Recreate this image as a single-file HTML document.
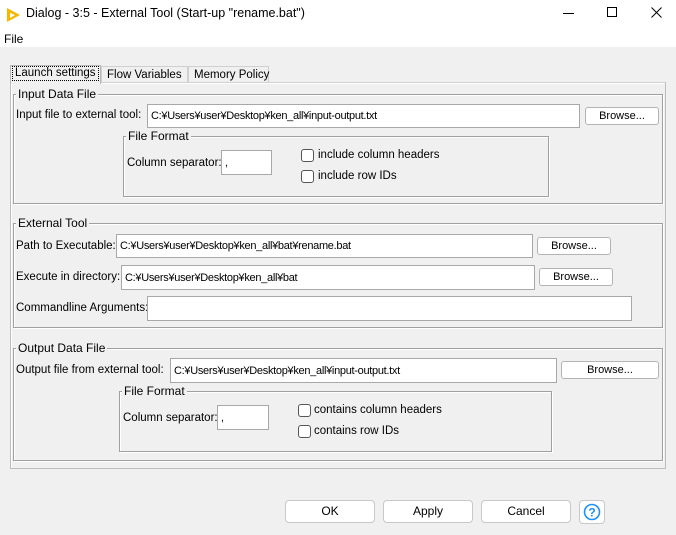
<!DOCTYPE html>
<html><head><style>
*{box-sizing:border-box;margin:0;padding:0}
body{width:676px;height:535px;background:#f0f0f0;font-family:"Liberation Sans","Noto Sans CJK JP",sans-serif;font-size:11.5px;color:#000;position:relative;overflow:hidden}
.a{position:absolute;white-space:nowrap}
.grp{position:absolute;border:1px solid #a0a0a0;box-shadow:1px 1px 0 #fff, inset 1px 1px 0 #fff}
.gt{position:absolute;background:#f0f0f0;padding:0 2px;line-height:13px;font-size:12px}
.tf{position:absolute;background:#fff;border:1px solid #a8a8a8;padding-left:3px;display:flex;align-items:center;font-size:11px;letter-spacing:-0.3px;white-space:nowrap;overflow:hidden}
.br{position:absolute;background:#fff;border:1px solid #b4b4b4;border-radius:3px;text-align:center;font-size:11px;line-height:16px}
.cb{position:absolute;width:13px;height:13px;border:1px solid #555;border-radius:3px;background:#fff}
.bt{position:absolute;background:#fff;border:1px solid #c8c8c8;border-radius:4px;text-align:center;font-size:12px;line-height:21px;top:500px;height:23px}
</style></head><body>
<div class="a" style="left:0;top:0;width:676px;height:47px;background:#fff"></div>
<svg class="a" style="left:5px;top:7px" width="16" height="16"><polygon points="2,1 15,8 2,15" fill="#f5b800"/><polygon points="5,6 10,8 5,11" fill="#fff"/></svg>
<div class="a" style="left:26px;top:6px;font-size:12.5px">Dialog - 3:5 - External Tool (Start-up "rename.bat")</div>
<div class="a" style="left:563px;top:13px;width:11px;height:1px;background:#000"></div>
<div class="a" style="left:607px;top:7px;width:10px;height:10px;border:1px solid #000"></div>
<svg class="a" style="left:651px;top:7px" width="11" height="11"><path d="M0.5 0.5L10.5 10.5M10.5 0.5L0.5 10.5" stroke="#000" stroke-width="1"/></svg>
<div class="a" style="left:4px;top:32px;font-size:12px">File</div>

<div class="a" style="left:10px;top:82px;width:656px;height:387px;border:1px solid #bdbdbd;border-top-color:#d0d0d0;box-shadow:inset 1px 1px 0 #fff"></div>
<div class="a" style="left:10px;top:65px;width:91px;height:19px;background:#f0f0f0;border:1px solid #b8b8b8;border-bottom:none"></div>
<div class="a" style="left:12px;top:66px;width:87px;height:15px;border:1px dotted #000;padding-left:2px;line-height:13px;font-size:11.5px">Launch settings</div>
<div class="a" style="left:101px;top:66px;width:87px;height:17px;border:1px solid #d0d0d0;border-bottom:none;padding-left:5px;line-height:17px">Flow Variables</div>
<div class="a" style="left:188px;top:66px;width:81px;height:17px;border:1px solid #d0d0d0;border-bottom:none;padding-left:5px;line-height:17px">Memory Policy</div>

<div class="grp" style="left:13px;top:94px;width:650px;height:110px"></div>
<div class="gt" style="left:16px;top:88px">Input Data File</div>
<div class="a" style="left:16px;top:109px">Input file to external tool:</div>
<div class="tf" style="left:147px;top:104px;width:433px;height:24px">C:¥Users¥user¥Desktop¥ken_all¥input-output.txt</div>
<div class="br" style="left:585px;top:107px;width:74px;height:18px">Browse...</div>
<div class="grp" style="left:123px;top:136px;width:426px;height:61px"></div>
<div class="gt" style="left:126px;top:130px">File Format</div>
<div class="a" style="left:127px;top:157px">Column separator:</div>
<div class="tf" style="left:221px;top:150px;width:51px;height:25px">,</div>
<div class="cb" style="left:301px;top:149px"></div><div class="a" style="left:318px;top:149px">include column headers</div>
<div class="cb" style="left:301px;top:170px"></div><div class="a" style="left:318px;top:170px">include row IDs</div>

<div class="grp" style="left:13px;top:223px;width:650px;height:105px"></div>
<div class="gt" style="left:16px;top:217px">External Tool</div>
<div class="a" style="left:16px;top:240px">Path to Executable:</div>
<div class="tf" style="left:116px;top:234px;width:417px;height:24px">C:¥Users¥user¥Desktop¥ken_all¥bat¥rename.bat</div>
<div class="br" style="left:537px;top:237px;width:74px;height:18px">Browse...</div>
<div class="a" style="left:16px;top:271px">Execute in directory:</div>
<div class="tf" style="left:121px;top:265px;width:414px;height:25px">C:¥Users¥user¥Desktop¥ken_all¥bat</div>
<div class="br" style="left:539px;top:268px;width:74px;height:18px">Browse...</div>
<div class="a" style="left:16px;top:302px">Commandline Arguments:</div>
<div class="tf" style="left:147px;top:296px;width:485px;height:25px"></div>

<div class="grp" style="left:13px;top:348px;width:650px;height:113px"></div>
<div class="gt" style="left:16px;top:342px">Output Data File</div>
<div class="a" style="left:16px;top:364px">Output file from external tool:</div>
<div class="tf" style="left:170px;top:358px;width:387px;height:25px">C:¥Users¥user¥Desktop¥ken_all¥input-output.txt</div>
<div class="br" style="left:561px;top:361px;width:98px;height:18px">Browse...</div>
<div class="grp" style="left:119px;top:391px;width:433px;height:61px"></div>
<div class="gt" style="left:122px;top:385px">File Format</div>
<div class="a" style="left:123px;top:412px">Column separator:</div>
<div class="tf" style="left:217px;top:405px;width:52px;height:25px">,</div>
<div class="cb" style="left:298px;top:404px"></div><div class="a" style="left:314px;top:404px">contains column headers</div>
<div class="cb" style="left:298px;top:425px"></div><div class="a" style="left:314px;top:425px">contains row IDs</div>

<div class="bt" style="left:285px;width:90px">OK</div>
<div class="bt" style="left:383px;width:90px">Apply</div>
<div class="bt" style="left:481px;width:90px">Cancel</div>
<div class="bt" style="left:579px;width:26px;height:24px"></div>
<svg class="a" style="left:583px;top:503px" width="18" height="18"><circle cx="9" cy="9" r="7.5" fill="none" stroke="#1e90ff" stroke-width="1.6"/><text x="9" y="13.5" font-size="12" font-weight="bold" text-anchor="middle" fill="#1e90ff" font-family="Liberation Sans">?</text></svg>
</body></html>
